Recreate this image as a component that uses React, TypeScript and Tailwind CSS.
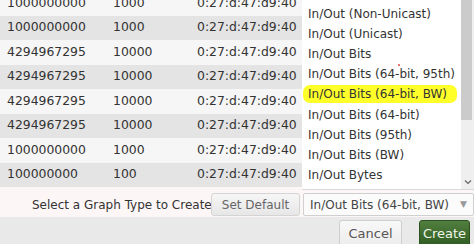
import React from "react";

const rows: [string, string][] = [
  ["1000000000", "1000"],
  ["1000000000", "1000"],
  ["4294967295", "10000"],
  ["4294967295", "10000"],
  ["4294967295", "10000"],
  ["4294967295", "10000"],
  ["1000000000", "1000"],
  ["100000000", "100"],
];

const items = [
  "In/Out (Non-Unicast)",
  "In/Out (Unicast)",
  "In/Out Bits",
  "In/Out Bits (64-bit, 95th)",
  "In/Out Bits (64-bit, BW)",
  "In/Out Bits (64-bit)",
  "In/Out Bits (95th)",
  "In/Out Bits (BW)",
  "In/Out Bytes",
  "In/Out Bytes (64-bit)",
];

export default function App() {
  return (
    <div
      className="relative w-[474px] h-[244px] overflow-hidden bg-white text-[#333]"
      style={{ fontFamily: '"DejaVu Sans", Verdana, sans-serif' }}
    >
      <div className="flex flex-col justify-end h-[187px] overflow-hidden">
        {rows.map((r, i) => (
          <div
            key={i}
            className={`flex items-center shrink-0 h-[24.5px] text-[12.4px] ${
              i % 2 === 0 ? "bg-[#f6f6f6]" : "bg-[#e4e4e4]"
            }`}
          >
            <div className="w-[113px] pl-[7px]">{r[0]}</div>
            <div className="w-[84px]">{r[1]}</div>
            <div className="whitespace-nowrap">0:27:d:47:d9:40</div>
          </div>
        ))}
      </div>

      <div className="flex items-start h-[30px] bg-[#fcf7f6] pt-[6px] pl-[32px] gap-[1px]">
        <div className="h-[23px] flex items-center text-[12px] text-[#333] whitespace-nowrap w-[178px]">
          Select a Graph Type to Create
        </div>
        <div className="w-[89px] h-[23px] flex items-center justify-center rounded-[3px] border border-[#d4d4d4] bg-gradient-to-b from-[#f6f6f6] to-[#e7e7e7] text-[12px] text-[#666]">
          Set Default
        </div>
        <div className="ml-[2px] flex-1 h-[23px] flex items-center justify-between border border-[#d0d0d0] rounded-[2px] bg-[#fbfbfb] pl-[6px] pr-[6px] text-[12px] text-[#444] whitespace-nowrap">
          <span>In/Out Bits (64-bit, BW)</span>
          <span className="text-[9px] text-[#999]">▼</span>
        </div>
      </div>

      <div className="flex justify-end items-start h-[27px] bg-[#e9e9e9] pt-[3px] pr-[4px] gap-[17px]">
        <div className="w-[63px] h-[28px] flex items-center justify-center rounded-[3px] border border-[#cfcfcf] bg-gradient-to-b from-[#f8f8f8] to-[#ececec] text-[13px] text-[#555]">
          Cancel
        </div>
        <div className="w-[51px] h-[28px] flex items-center justify-center rounded-[3px] border border-[#2c5220] bg-gradient-to-b from-[#517f3f] to-[#2e5a20] text-[13px] text-[#eef5e8]">
          Create
        </div>
      </div>

      <div className="absolute left-[302px] top-0 w-[172px] h-[190px] flex bg-white border-b border-[#d8d8d8]">
        <div className="flex-1 overflow-hidden pt-[4px] text-[12px] text-[#333]">
          {items.map((t, i) => (
            <div key={i} className="relative h-[20.1px] flex items-center pl-[6px] whitespace-nowrap">
              {i === 4 && (
                <span className="absolute left-[1px] top-[1px] w-[154px] h-[18px] rounded-[7px] bg-[#ffff2a]" />
              )}
              <span className="relative">{t}</span>
            </div>
          ))}
        </div>
        <div className="w-[13px] flex flex-col bg-[#efefef]">
          <div className="h-[120px] bg-[#cbcbcb] mr-[2px]" />
          <div className="flex-1 flex items-end justify-center pb-[4px]">
            <svg width="8" height="6" viewBox="0 0 8 6">
              <path d="M1 1.5 L4 4.5 L7 1.5" fill="none" stroke="#666" strokeWidth="1.2" />
            </svg>
          </div>
        </div>
        <span className="absolute left-[96px] top-[64px] w-[2px] h-[2px] bg-[#e04848] rounded-full" />
      </div>
    </div>
  );
}
